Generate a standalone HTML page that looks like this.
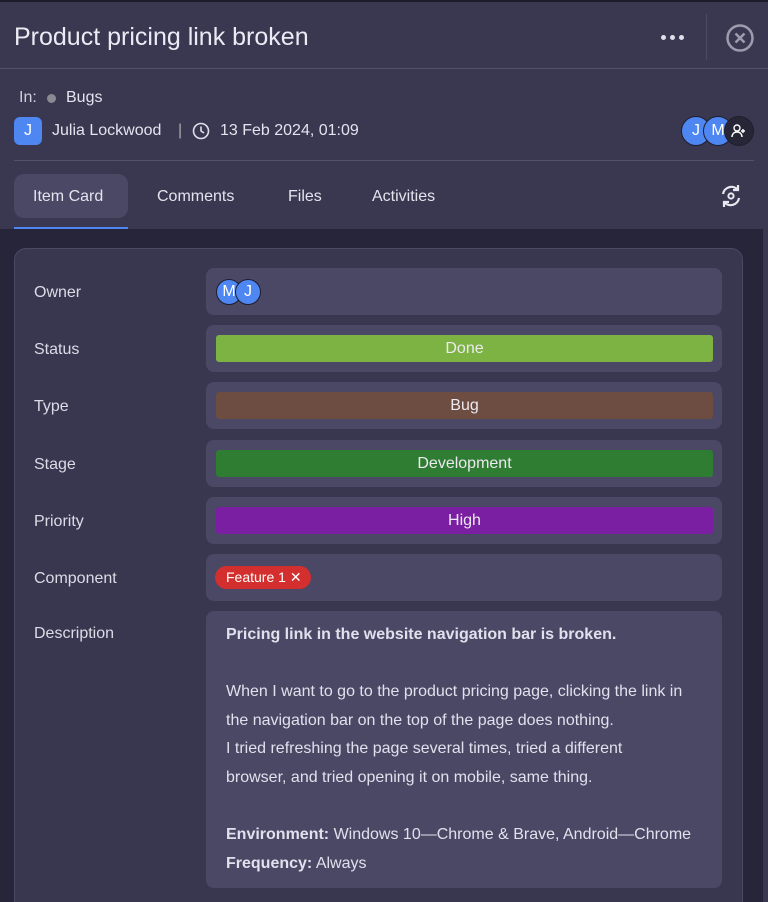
<!DOCTYPE html>
<html style="width:768px;height:902px;overflow:hidden"><head><meta charset="utf-8"><style>
*{box-sizing:border-box;margin:0;padding:0}
body{width:768px;height:902px;overflow:hidden;background:#272539;font-family:"Liberation Sans",sans-serif;color:#e4e3ee;position:relative}
.top{position:absolute;left:0;top:0;width:768px;height:229px;background:#3a3850;border-top:2px solid #1c1b27}
.abs{position:absolute}
.title{left:14px;top:21px;font-size:25px;color:#eceaf4}
.row{left:206px;width:516px;height:47px;background:#4a4865;border-radius:8px}
.lab{left:34px;font-size:16px;color:#dcdbe6}
.bar{position:absolute;left:10px;right:9px;top:10px;height:27px;border-radius:3px;text-align:center;font-size:16px;line-height:27px;color:#ece9f0}
.av{position:absolute;width:26px;height:26px;border-radius:50%;background:#4e86f2;border:1px solid #1f1e2e;color:#fff;font-size:16px;text-align:center;line-height:24px}
.desc p{font-size:16px;line-height:28.6px;color:#e2e0ec;white-space:nowrap}
</style></head><body>
<div class="top">
<div class="abs title">Product pricing link broken</div>
<div class="abs" style="left:661px;top:33px;width:5px;height:5px;border-radius:50%;background:#e0e0ea"></div>
<div class="abs" style="left:670px;top:33px;width:5px;height:5px;border-radius:50%;background:#e0e0ea"></div>
<div class="abs" style="left:679px;top:33px;width:5px;height:5px;border-radius:50%;background:#e0e0ea"></div>
<div class="abs" style="left:706px;top:12px;width:1px;height:46px;background:#4d4b62"></div>
<svg class="abs" style="left:725px;top:21px" width="30" height="30" viewBox="0 0 30 30"><circle cx="15" cy="15" r="12.5" fill="none" stroke="#9d9cae" stroke-width="2.5"/><path d="M10.5 10.5l9 9M19.5 10.5l-9 9" stroke="#9d9cae" stroke-width="2.5"/></svg>
<div class="abs" style="left:0;top:66px;width:768px;height:1px;background:#52506a"></div>
<div class="abs" style="left:19px;top:87px;font-size:16px;color:#d0cfdc">In:</div>
<div class="abs" style="left:47px;top:92px;width:9px;height:9px;border-radius:50%;background:#8a8994"></div>
<div class="abs" style="left:66px;top:87px;font-size:16px">Bugs</div>
<div class="abs" style="left:14px;top:115px;width:28px;height:28px;border-radius:6px;background:#4e86f2;color:#fff;text-align:center;line-height:28px;font-size:16px">J</div>
<div class="abs" style="left:52px;top:120px;font-size:16px">Julia Lockwood</div>
<div class="abs" style="left:178px;top:120px;font-size:16px;color:#aaa">|</div>
<svg class="abs" style="left:192px;top:120px" width="18" height="18" viewBox="0 0 18 18"><circle cx="9" cy="9" r="7.5" fill="none" stroke="#e0e0ea" stroke-width="1.6"/><path d="M9 4.5V9l3 2" fill="none" stroke="#e0e0ea" stroke-width="1.6"/></svg>
<div class="abs" style="left:220px;top:120px;font-size:16px">13 Feb 2024, 01:09</div>
<div class="av" style="left:681px;top:114px;width:30px;height:30px;line-height:28px">J</div>
<div class="av" style="left:703px;top:114px;width:30px;height:30px;line-height:28px">M</div>
<div class="av" style="left:724px;top:114px;width:30px;height:30px;background:#272636;line-height:28px"><svg width="18" height="18" viewBox="0 0 18 18" style="margin-top:5px"><circle cx="7" cy="6" r="3" fill="none" stroke="#fff" stroke-width="1.4"/><path d="M2 15c0-3 2-5 5-5s5 2 5 5M13 7v4M11 9h4" fill="none" stroke="#fff" stroke-width="1.4"/></svg></div>
<div class="abs" style="left:14px;top:158px;width:740px;height:1px;background:#52506a"></div>
<div class="abs" style="left:14px;top:172px;width:114px;height:44px;border-radius:10px;background:#4a4865"></div>
<div class="abs" style="left:33px;top:186px;font-size:16px">Item Card</div>
<div class="abs" style="left:157px;top:186px;font-size:16px">Comments</div>
<div class="abs" style="left:288px;top:186px;font-size:16px">Files</div>
<div class="abs" style="left:372px;top:186px;font-size:16px">Activities</div>
<div class="abs" style="left:14px;top:225px;width:114px;height:2px;background:#4e86f2"></div>
<svg class="abs" style="left:717px;top:180px" width="28" height="28" viewBox="0 0 28 28"><path d="M6 12a8.5 8.5 0 0 1 15-4M22 16a8.5 8.5 0 0 1-15 4" fill="none" stroke="#e8e8f0" stroke-width="2.2"/><path d="M21 3v5h-5M7 25v-5h5" fill="none" stroke="#e8e8f0" stroke-width="2.2"/><circle cx="14" cy="14" r="2.6" fill="none" stroke="#e8e8f0" stroke-width="2"/></svg>
</div>
<div class="abs" style="left:763px;top:229px;width:5px;height:673px;background:#3a3850"></div>
<div class="abs" style="left:14px;top:248px;width:729px;height:680px;border-radius:12px;background:#393750;border:1px solid #4a4862"></div>
<div class="abs lab" style="top:284px">Owner</div>
<div class="abs row" style="top:268px"><div class="av" style="left:10px;top:11px">M</div><div class="av" style="left:29px;top:11px">J</div></div>
<div class="abs lab" style="top:341px">Status</div>
<div class="abs row" style="top:325px"><div class="bar" style="background:#7cb342">Done</div></div>
<div class="abs lab" style="top:398px">Type</div>
<div class="abs row" style="top:382px"><div class="bar" style="background:#6d4c41">Bug</div></div>
<div class="abs lab" style="top:456px">Stage</div>
<div class="abs row" style="top:440px"><div class="bar" style="background:#2e7d32">Development</div></div>
<div class="abs lab" style="top:513px">Priority</div>
<div class="abs row" style="top:497px"><div class="bar" style="background:#7b1fa2">High</div></div>
<div class="abs lab" style="top:570px">Component</div>
<div class="abs row" style="top:554px"><div class="abs" style="left:9px;top:12px;height:23px;padding:0 9px 0 11px;border-radius:12px;background:#d32f2f;color:#fff;font-size:14px;line-height:23px">Feature 1 ✕</div></div>
<div class="abs lab" style="top:625px">Description</div>
<div class="abs row desc" style="top:611px;height:277px;padding:10px 20px">
<p><b>Pricing link in the website navigation bar is broken.</b></p><p>&nbsp;</p>
<p>When I want to go to the product pricing page, clicking the link in<br>the navigation bar on the top of the page does nothing.<br>I tried refreshing the page several times, tried a different<br>browser, and tried opening it on mobile, same thing.</p><p>&nbsp;</p>
<p><b>Environment:</b> Windows 10—Chrome &amp; Brave, Android—Chrome<br><b>Frequency:</b> Always</p>
</div>
</body></html>
